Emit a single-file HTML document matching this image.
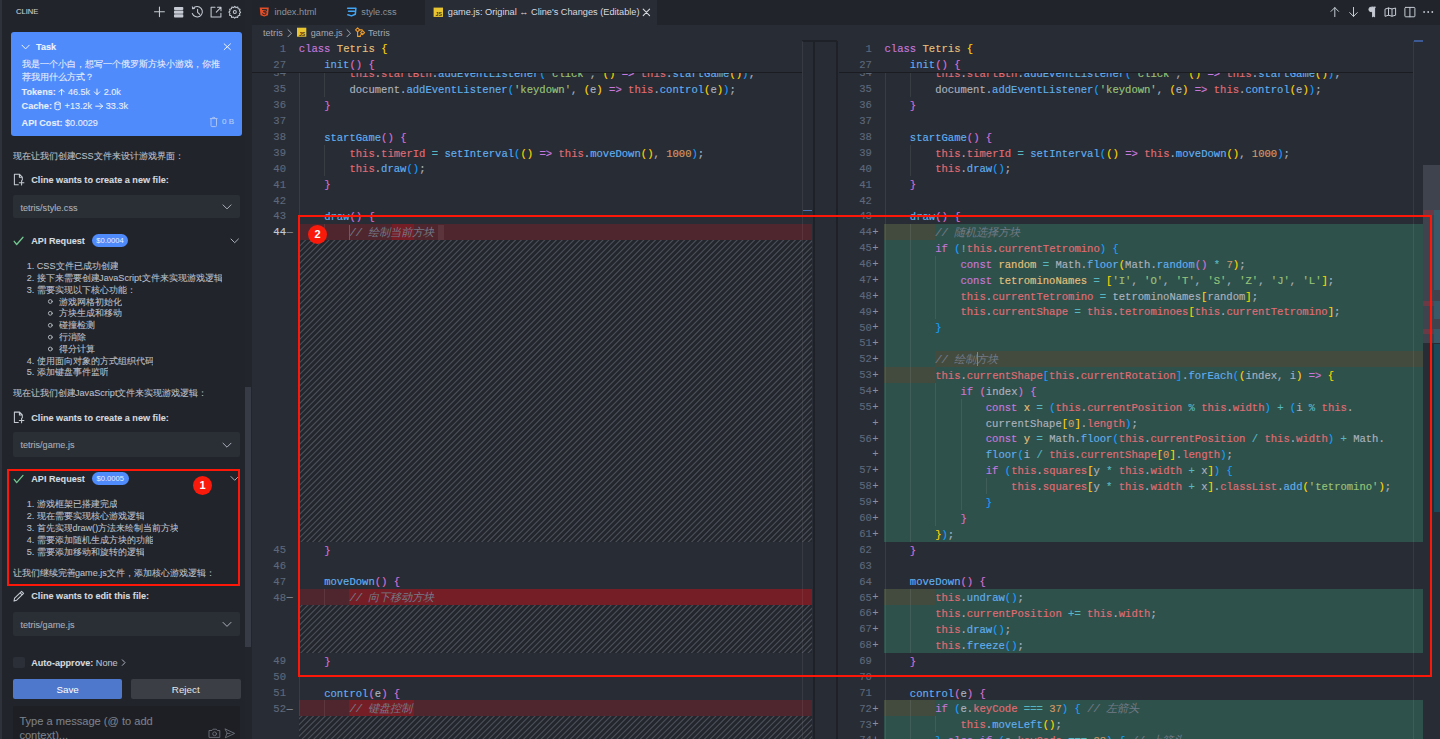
<!DOCTYPE html>
<html><head><meta charset="utf-8">
<style>
*{box-sizing:border-box;margin:0;padding:0}
html,body{width:1440px;height:739px;overflow:hidden;background:#282c34;font-family:"Liberation Sans",sans-serif;}
.a{position:absolute;white-space:nowrap}
.cj{display:inline-block;overflow:hidden;vertical-align:top;white-space:nowrap}
/* sidebar */
#strip{position:absolute;left:0;top:0;width:2px;height:739px;background:#2e323b}
#side{position:absolute;left:2px;top:0;width:243px;height:739px;background:#21252b;overflow:hidden}
#sbtrack{position:absolute;left:245px;top:0;width:7px;height:739px;background:#22262c}
#sbthumb{position:absolute;left:245px;top:387px;width:6px;height:260px;background:#363b45}
.st{position:absolute;white-space:nowrap;font-size:9.1px;line-height:12px;color:#b9bec6;-webkit-text-stroke:0.1px currentColor}
.bold{font-weight:bold;color:#d5d9df}
.dd{position:absolute;left:13.4px;width:226.6px;height:24px;background:#2a2e35;border-radius:2px}
.chev{position:absolute}
.badge{position:absolute;height:13.5px;border-radius:7px;background:#508bfc;color:#e9f0fc;font-size:7.6px;line-height:13.5px;text-align:center}
.redbox{position:absolute;border:2.9px solid #fc1708}
.circ{position:absolute;width:19px;height:19px;border-radius:50%;background:#fa1a0c;color:#fff;font-size:11px;line-height:19px;text-align:center;font-weight:bold}
/* editor */
#tabs{position:absolute;left:252px;top:0;width:1188px;height:24.5px;background:#21252b}
.tab{position:absolute;top:0;height:24.5px;font-size:9.2px;line-height:24.5px;color:#8d939d;white-space:nowrap}
#crumbs{position:absolute;left:252px;top:24.5px;width:1188px;height:16px;background:#282c34}
.cr{position:absolute;font-size:9.1px;line-height:16px;color:#a3a9b3;white-space:nowrap;top:25.1px}
.ln{position:absolute;padding-top:1.2px;-webkit-text-stroke:0.15px currentColor;text-align:right;font-family:"Liberation Mono",monospace;font-size:10.55px;line-height:15.88px;height:15.88px;color:#5d687b}
.ln.act{color:#c4c9d2}
.mk{position:absolute;padding-top:1px;font-family:"Liberation Mono",monospace;font-size:10.55px;line-height:15.88px;color:#8b909a}
.cl{position:absolute;padding-top:1.9px;-webkit-text-stroke:0.15px currentColor;font-family:"Liberation Mono",monospace;font-size:10.55px;line-height:15.88px;height:15.88px;color:#abb2bf;white-space:pre}
.cl i{color:#737a86;font-style:italic}
.cl .cj{font-size:11.2px;-webkit-text-stroke:0}
.k{color:#c678dd}.t{color:#e06c75}.p{color:#e06c75}.f{color:#61afef}.y{color:#e5c07b}.s{color:#98c379}.n{color:#d19a66}.o{color:#56b6c2}
.b0{color:#ffd700}.b1{color:#da70d6}.b2{color:#179fff}
.hatch{position:absolute;display:block}
.dl{position:absolute;background:#4f262d}
.al{position:absolute;background:#2f514b}
.sticky{position:absolute;background:#282c34}
.shadow{position:absolute;height:1.6px;background:#1a1c21}
.vl{position:absolute;width:1px;background:rgba(255,255,255,0.07)}
.ol{position:absolute;background:#434b3f}
.rc{position:absolute;background:#761e26}
.ig{position:absolute;background:rgba(255,255,255,0.08)}
</style></head><body>
<svg width="0" height="0" style="position:absolute"><defs><pattern id="hp" patternUnits="userSpaceOnUse" width="5.83" height="5.83"><rect width="6" height="6" fill="#23262d"/><path d="M-0.5,6.33 L6.33,-0.5 M-2,2 L2,-2 M3.83,7.83 L7.83,3.83" stroke="#4a4e57" stroke-width="1.1" shape-rendering="crispEdges"/></pattern></defs></svg>
<div id="strip"></div>
<div id="side">
</div>
<div id="sbtrack"></div><div id="sbthumb"></div>

<!-- header -->
<div class="st" style="left:16px;top:6px;font-size:7.6px;color:#c9ced6">CLINE</div>

<!-- task box -->
<div style="position:absolute;left:11px;top:32.2px;width:231px;height:104.3px;background:#508bfc;border-radius:3px"></div>
<div class="st bold" style="left:36px;top:41px;color:#eef3fc">Task</div>
<div class="st" style="left:21.6px;top:58px;color:#e8eefa"><span class="cj" style="width:206.36px">我是一个小白，想写一个俄罗斯方块小游戏，你推</span></div>
<div class="st" style="left:21.6px;top:70.5px;color:#e8eefa"><span class="cj" style="width:75.04px">荐我用什么方式？</span></div>
<div class="st" style="left:21.6px;top:85.5px;color:#e8eefa"><b>Tokens:</b></div><div class="st" style="left:67.9px;top:85.5px;color:#e8eefa">46.5k</div><div class="st" style="left:103.7px;top:85.5px;color:#e8eefa">2.0k</div>
<div class="st" style="left:21.6px;top:100.4px;color:#e8eefa"><b>Cache:</b></div><div class="st" style="left:64.6px;top:100.4px;color:#e8eefa">+13.2k</div><div class="st" style="left:105.8px;top:100.4px;color:#e8eefa">33.3k</div>
<div class="st" style="left:21.6px;top:117.4px;color:#e8eefa"><b>API Cost:</b> $0.0029</div>
<div class="st" style="left:222px;top:116px;color:#b5cdf6;font-size:8px">0 B</div>

<div class="st" style="left:12.7px;top:149.6px"><span class="cj" style="width:62.30px">现在让我们创建</span>CSS<span class="cj" style="width:89.00px">文件来设计游戏界面：</span></div>
<div class="st bold" style="left:31.3px;top:174px">Cline wants to create a new file:</div>
<div class="dd" style="top:194.8px;height:23.4px"></div>
<div class="st" style="left:20.4px;top:201.8px;color:#a9aeb6">tetris/style.css</div>
<div class="st bold" style="left:31.3px;top:235.3px">API Request</div>
<div class="badge" style="left:91.6px;top:233.5px;width:36.8px">$0.0004</div>
<div class="st" style="left:26.7px;top:260.2px">1. CSS<span class="cj" style="width:62.30px">文件已成功创建</span></div>
<div class="st" style="left:26.7px;top:272.1px">2. <span class="cj" style="width:62.30px">接下来需要创建</span>JavaScript<span class="cj" style="width:80.10px">文件来实现游戏逻辑</span></div>
<div class="st" style="left:26.7px;top:284.1px">3. <span class="cj" style="width:97.90px">需要实现以下核心功能：</span></div>
<div class="st" style="left:59.3px;top:295.5px"><span class="cj" style="width:62.30px">游戏网格初始化</span></div>
<div class="st" style="left:59.3px;top:307.3px"><span class="cj" style="width:62.30px">方块生成和移动</span></div>
<div class="st" style="left:59.3px;top:319.3px"><span class="cj" style="width:35.60px">碰撞检测</span></div>
<div class="st" style="left:59.3px;top:331.2px"><span class="cj" style="width:26.70px">行消除</span></div>
<div class="st" style="left:59.3px;top:343px"><span class="cj" style="width:35.60px">得分计算</span></div>
<div class="st" style="left:26.7px;top:354.5px">4. <span class="cj" style="width:115.70px">使用面向对象的方式组织代码</span></div>
<div class="st" style="left:26.7px;top:366px">5. <span class="cj" style="width:71.20px">添加键盘事件监听</span></div>

<div class="st" style="left:12.7px;top:387.2px"><span class="cj" style="width:62.30px">现在让我们创建</span>JavaScript<span class="cj" style="width:89.00px">文件来实现游戏逻辑：</span></div>
<div class="st bold" style="left:31.3px;top:411.8px">Cline wants to create a new file:</div>
<div class="dd" style="top:431.9px;height:25px"></div>
<div class="st" style="left:20.4px;top:439.4px;color:#a9aeb6">tetris/game.js</div>
<div class="st bold" style="left:31.3px;top:473.4px">API Request</div>
<div class="badge" style="left:91.8px;top:471.8px;width:36.8px">$0.0005</div>
<div class="st" style="left:26.7px;top:498.4px">1. <span class="cj" style="width:80.10px">游戏框架已搭建完成</span></div>
<div class="st" style="left:26.7px;top:510px">2. <span class="cj" style="width:106.80px">现在需要实现核心游戏逻辑</span></div>
<div class="st" style="left:26.7px;top:521.8px">3. <span class="cj" style="width:35.60px">首先实现</span>draw()<span class="cj" style="width:80.10px">方法来绘制当前方块</span></div>
<div class="st" style="left:26.7px;top:533.8px">4. <span class="cj" style="width:115.70px">需要添加随机生成方块的功能</span></div>
<div class="st" style="left:26.7px;top:545.6px">5. <span class="cj" style="width:106.80px">需要添加移动和旋转的逻辑</span></div>
<div class="st" style="left:12.7px;top:566.7px"><span class="cj" style="width:62.30px">让我们继续完善</span>game.js<span class="cj" style="width:106.80px">文件，添加核心游戏逻辑：</span></div>
<div class="redbox" style="left:7px;top:468.8px;width:233px;height:117.6px"></div>
<div class="circ" style="left:193px;top:475.7px">1</div>

<div class="st bold" style="left:31.3px;top:590.4px">Cline wants to edit this file:</div>
<div class="dd" style="top:611.9px;height:24.1px"></div>
<div class="st" style="left:20.4px;top:618.6px;color:#a9aeb6">tetris/game.js</div>

<div style="position:absolute;left:13.3px;top:656.8px;width:11.5px;height:11.5px;background:#2b2f37;border-radius:2px"></div>
<div class="st" style="left:31.2px;top:656.9px"><b style="color:#d5d9df">Auto-approve:</b> None</div>
<div style="position:absolute;left:12.9px;top:679px;width:109.4px;height:19.6px;background:#4d78cc;border-radius:2px;color:#fff;font-size:9.8px;line-height:21.4px;text-align:center">Save</div>
<div style="position:absolute;left:130.9px;top:679px;width:109.7px;height:19.6px;background:#3b3e45;border-radius:2px;color:#e6e6e6;font-size:9.8px;line-height:21.4px;text-align:center">Reject</div>
<div style="position:absolute;left:13.3px;top:706px;width:226.7px;height:40px;background:#1d1f24;border-radius:2px"></div>
<div class="st" style="left:19.4px;top:714px;font-size:11.1px;line-height:14px;color:#7b8089">Type a message (@ to add</div>
<div class="st" style="left:19.4px;top:727.5px;font-size:11.1px;line-height:14px;color:#7b8089">context)...</div>


<!-- ICONS -->
<svg style="position:absolute;left:0;top:0" width="252" height="739" fill="none" stroke-linecap="round" stroke-linejoin="round">
 <!-- header -->
 <g stroke="#c5cad3" stroke-width="1.05">
  <path d="M154.5 11.8H164.4M159.45 6.9V16.6"/>
  <path d="M193 8.4 L192.3 6.9 M192.4 8.7 L194.4 8.5"/>
  <path d="M193.1 8.5 A5.2 5.2 0 1 1 192.3 13.5"/>
  <path d="M197.6 9.2V12.3L199.8 14.4"/>
  <path d="M215 7.3H211.1V17H220.9V13.2M216.3 12.1L220.7 7.6M217.5 7.3H221V10.8"/>
  <circle cx="234.8" cy="12" r="1.5"/>
  <path d="M234.8 6.3 L236 7.6 L237.8 7 L238.2 8.8 L240 9.3 L239.5 11 L240.6 12.3 L239.4 13.6 L239.9 15.3 L238.1 15.7 L237.6 17.5 L235.9 17 L234.7 18.2 L233.5 17 L231.7 17.5 L231.3 15.7 L229.5 15.2 L230 13.5 L228.9 12.2 L230.1 10.9 L229.6 9.2 L231.4 8.8 L231.9 7 L233.6 7.6 Z"/>
 </g>
 <g fill="#c5cad3" stroke="none">
  <rect x="174" y="6.9" width="9.3" height="3.2" rx="0.8"/>
  <rect x="174" y="10.6" width="9.3" height="3.2" rx="0.8"/>
  <rect x="174" y="14.3" width="9.3" height="3.2" rx="0.8"/>
 </g>
 <!-- task box -->
 <g stroke="#eef3fc" stroke-width="1">
  <path d="M22 45.2L25.6 48.9L29.2 45.2"/>
  <path d="M224.2 43.9L230.4 49.6M230.4 43.9L224.2 49.6"/>
  <path d="M61.6 94.8V89.3M58.9 91.9L61.6 89.2L64.3 91.9M97 89V94.6M94.3 91.9L97 94.6L99.7 91.9M95.6 106.2H102.6M99.8 103.4L102.6 106.2L99.8 109"/>
  <path d="M55 103.2V108.6A2.6 1.2 0 0 0 60.2 108.6V103.2M55 103.2A2.6 1.2 0 0 1 60.2 103.2A2.6 1.2 0 0 1 55 103.2"/>
 </g>
 <g stroke="#a8c3f5" stroke-width="1">
  <path d="M210.3 118.6H217.2M212 118.4A1.8 1.5 0 0 1 215.5 118.4M211 119V125.6A1 1 0 0 0 212 126.6H215.5A1 1 0 0 0 216.5 125.6V119"/>
 </g>
 <!-- file add icons -->
 <g stroke="#c5cad3" stroke-width="1.05">
  <path d="M18.3 184.7H14.4V174.3H19.6L22.3 177V180M19.4 174.4V177.2H22.2M21.6 180.4V185M19.3 182.7H23.9"/>
  <path d="M18.3 422.5H14.4V412.1H19.6L22.3 414.8V417.8M19.4 412.2V415H22.2M21.6 418.2V422.8M19.3 420.5H23.9"/>
  <path d="M14 601 L14.6 598.2 L21.6 591.4 L23.6 593.3 L16.7 600.2 Z M20.2 592.8 L22.2 594.8"/>
 </g>
 <!-- checks -->
 <g stroke="#73c991" stroke-width="1.3">
  <path d="M14.2 241.3L16.7 244.5L23 237.3"/>
  <path d="M14.2 479.4L16.7 482.6L23 475.4"/>
 </g>
 <!-- chevrons -->
 <g stroke="#abb1bb" stroke-width="1">
  <path d="M223 204.9L227 208.9L231 204.9"/>
  <path d="M223 443.2L227 447.2L231 443.2"/>
  <path d="M223 622.4L227 626.4L231 622.4"/>
  <path d="M231 239L234.7 242.7L238.4 239"/>
  <path d="M231 476.6L234.7 480.3L237.6 477.4"/>
  <path d="M122.3 659.8L125 662.6L122.3 665.4"/>
 </g>
 <!-- bullets -->
 <g stroke="#b9bec6" stroke-width="0.9">
  <circle cx="50.3" cy="301.5" r="1.9"/>
  <circle cx="50.3" cy="313.3" r="1.9"/>
  <circle cx="50.3" cy="325.3" r="1.9"/>
  <circle cx="50.3" cy="337.2" r="1.9"/>
  <circle cx="50.3" cy="349" r="1.9"/>
 </g>
 <!-- bottom input icons -->
 <g stroke="#6d727b" stroke-width="0.9">
  <path d="M209.4 730.5H212L213 729.2H216.3L217.3 730.5H219.8V737.4H209.4Z"/>
  <circle cx="214.6" cy="733.8" r="1.9"/>
  <path d="M225.3 729L234.6 733.4L225.3 737.8L227 733.4Z M227 733.4H230"/>
 </g>
</svg>


<!-- editor -->
<div id="tabs"></div>
<div class="tab" style="left:252px;width:86px;"></div>
<div class="tab" style="left:274.5px">index.html</div>
<div class="tab" style="left:361.3px">style.css</div>
<div style="position:absolute;left:425px;top:0;width:231.5px;height:24.5px;background:#282c34"></div>
<div class="tab" style="left:447.8px;color:#d7dae0">game.js: Original &#8596; Cline's Changes (Editable)</div>
<div id="crumbs"></div>
<div class="cr" style="left:263px">tetris</div>
<div class="cr" style="left:310.8px">game.js</div>
<div class="cr" style="left:368px">Tetris</div>

<svg style="position:absolute;left:252px;top:0" width="1188" height="42" fill="none" stroke-linecap="round" stroke-linejoin="round">
 <g transform="translate(-252 0)">
 <!-- html5 -->
 <path d="M259.7 7.6H268.8L268 15.3L264.25 16.6L260.5 15.3Z" fill="#e44d26"/>
 <path d="M262 9.5H266.6L266.3 11.1H263.7L263.8 12.1H266.1L265.8 14.2L264.25 14.7L262.7 14.2L262.6 13.3" stroke="#21252b" stroke-width="0.9" stroke-linecap="butt" stroke-linejoin="miter"/>
 <!-- css3 -->
 <path d="M347.6 8.3H355.9L355.3 14.3L351.5 15.9L347.8 14.7" stroke="#42a5f5" stroke-width="1.5" stroke-linejoin="round"/>
 <path d="M348.5 11.3H354.5" stroke="#42a5f5" stroke-width="1.4"/>
 <!-- js tab -->
 <rect x="433.6" y="7.6" width="9.4" height="9.3" fill="#e8c531"/>
 <text x="441.9" y="16.2" font-family="Liberation Sans" font-size="5.2" font-weight="bold" fill="#3a3414" text-anchor="end">JS</text>
 <path d="M643.2 9.2L649.6 15.6M649.6 9.2L643.2 15.6" stroke="#d7dae0" stroke-width="1.1"/>
 <!-- breadcrumb -->
 <rect x="297" y="27.7" width="9.3" height="9" fill="#e8c531"/>
 <text x="305.3" y="36" font-family="Liberation Sans" font-size="5.2" font-weight="bold" fill="#3a3414" text-anchor="end">JS</text>
 <path d="M288 29.7L291.5 33.2L288 36.7M347 29.7L350.5 33.2L347 36.7" stroke="#a3a9b3" stroke-width="1"/>
 <g stroke="#ee9d28" stroke-width="1.1">
  <path d="M355.6 29.9L357.6 27.9L359.6 29.9L357.6 31.9Z"/>
  <path d="M360.6 32.6L362.6 30.6L364.6 32.6L362.6 34.6Z"/>
  <path d="M360.3 35.4L362.3 33.4"/>
  <path d="M359.6 29.9H362.2M357.6 31.9V36.4H360.4"/>
 </g>
 <!-- right icons -->
 <g stroke="#c5cad3" stroke-width="1">
  <path d="M1334.8 16.6V7.6M1331 11.4L1334.8 7.6L1338.6 11.4"/>
  <path d="M1353.5 7.4V16.4M1349.7 12.6L1353.5 16.4L1357.3 12.6"/>
  <path d="M1372.6 7.2V16.8M1374.6 7.2V16.8M1375.4 7.2H1371.1A2.2 2.2 0 0 0 1371.1 11.6H1372.6"/>
  <path d="M1385.4 9L1388.5 8L1392 9L1395.6 8V15.2L1392 16.2L1388.5 15.2L1385.4 16.2Z M1388.5 8V15.2 M1392 9V16.2"/>
  <rect x="1404.9" y="7.4" width="10" height="9.4" rx="0.8"/>
  <path d="M1409.9 7.4V16.8"/>
 </g>
 <g fill="#c5cad3" stroke="none">
  <circle cx="1424.1" cy="12" r="0.9"/><circle cx="1428.2" cy="12" r="0.9"/><circle cx="1432.3" cy="12" r="0.9"/>
  <path d="M1372.6 7.2H1374.6V16.8H1372.6Z M1372.6 7.2H1371.1A2.2 2.2 0 0 0 1371.1 11.6H1372.6Z"/>
 </g>
 </g>
</svg>
<svg class="hatch" style="left:298.5px;top:240px" width="513.5" height="302"><rect width="100%" height="100%" fill="#23262d"/><path d="M-308.97 304.00L-2.97 -2.00M-303.14 304.00L2.86 -2.00M-297.31 304.00L8.69 -2.00M-291.48 304.00L14.52 -2.00M-285.65 304.00L20.35 -2.00M-279.82 304.00L26.18 -2.00M-273.99 304.00L32.01 -2.00M-268.16 304.00L37.84 -2.00M-262.33 304.00L43.67 -2.00M-256.50 304.00L49.50 -2.00M-250.67 304.00L55.33 -2.00M-244.84 304.00L61.16 -2.00M-239.01 304.00L66.99 -2.00M-233.18 304.00L72.82 -2.00M-227.35 304.00L78.65 -2.00M-221.52 304.00L84.48 -2.00M-215.69 304.00L90.31 -2.00M-209.86 304.00L96.14 -2.00M-204.03 304.00L101.97 -2.00M-198.20 304.00L107.80 -2.00M-192.37 304.00L113.63 -2.00M-186.54 304.00L119.46 -2.00M-180.71 304.00L125.29 -2.00M-174.88 304.00L131.12 -2.00M-169.05 304.00L136.95 -2.00M-163.22 304.00L142.78 -2.00M-157.39 304.00L148.61 -2.00M-151.56 304.00L154.44 -2.00M-145.73 304.00L160.27 -2.00M-139.90 304.00L166.10 -2.00M-134.07 304.00L171.93 -2.00M-128.24 304.00L177.76 -2.00M-122.41 304.00L183.59 -2.00M-116.58 304.00L189.42 -2.00M-110.75 304.00L195.25 -2.00M-104.92 304.00L201.08 -2.00M-99.09 304.00L206.91 -2.00M-93.26 304.00L212.74 -2.00M-87.43 304.00L218.57 -2.00M-81.60 304.00L224.40 -2.00M-75.77 304.00L230.23 -2.00M-69.94 304.00L236.06 -2.00M-64.11 304.00L241.89 -2.00M-58.28 304.00L247.72 -2.00M-52.45 304.00L253.55 -2.00M-46.62 304.00L259.38 -2.00M-40.79 304.00L265.21 -2.00M-34.96 304.00L271.04 -2.00M-29.13 304.00L276.87 -2.00M-23.30 304.00L282.70 -2.00M-17.47 304.00L288.53 -2.00M-11.64 304.00L294.36 -2.00M-5.81 304.00L300.19 -2.00M0.02 304.00L306.02 -2.00M5.85 304.00L311.85 -2.00M11.68 304.00L317.68 -2.00M17.51 304.00L323.51 -2.00M23.34 304.00L329.34 -2.00M29.17 304.00L335.17 -2.00M35.00 304.00L341.00 -2.00M40.83 304.00L346.83 -2.00M46.66 304.00L352.66 -2.00M52.49 304.00L358.49 -2.00M58.32 304.00L364.32 -2.00M64.15 304.00L370.15 -2.00M69.98 304.00L375.98 -2.00M75.81 304.00L381.81 -2.00M81.64 304.00L387.64 -2.00M87.47 304.00L393.47 -2.00M93.30 304.00L399.30 -2.00M99.13 304.00L405.13 -2.00M104.96 304.00L410.96 -2.00M110.79 304.00L416.79 -2.00M116.62 304.00L422.62 -2.00M122.45 304.00L428.45 -2.00M128.28 304.00L434.28 -2.00M134.11 304.00L440.11 -2.00M139.94 304.00L445.94 -2.00M145.77 304.00L451.77 -2.00M151.60 304.00L457.60 -2.00M157.43 304.00L463.43 -2.00M163.26 304.00L469.26 -2.00M169.09 304.00L475.09 -2.00M174.92 304.00L480.92 -2.00M180.75 304.00L486.75 -2.00M186.58 304.00L492.58 -2.00M192.41 304.00L498.41 -2.00M198.24 304.00L504.24 -2.00M204.07 304.00L510.07 -2.00M209.90 304.00L515.90 -2.00M215.73 304.00L521.73 -2.00M221.56 304.00L527.56 -2.00M227.39 304.00L533.39 -2.00M233.22 304.00L539.22 -2.00M239.05 304.00L545.05 -2.00M244.88 304.00L550.88 -2.00M250.71 304.00L556.71 -2.00M256.54 304.00L562.54 -2.00M262.37 304.00L568.37 -2.00M268.20 304.00L574.20 -2.00M274.03 304.00L580.03 -2.00M279.86 304.00L585.86 -2.00M285.69 304.00L591.69 -2.00M291.52 304.00L597.52 -2.00M297.35 304.00L603.35 -2.00M303.18 304.00L609.18 -2.00M309.01 304.00L615.01 -2.00M314.84 304.00L620.84 -2.00M320.67 304.00L626.67 -2.00M326.50 304.00L632.50 -2.00M332.33 304.00L638.33 -2.00M338.16 304.00L644.16 -2.00M343.99 304.00L649.99 -2.00M349.82 304.00L655.82 -2.00M355.65 304.00L661.65 -2.00M361.48 304.00L667.48 -2.00M367.31 304.00L673.31 -2.00M373.14 304.00L679.14 -2.00M378.97 304.00L684.97 -2.00M384.80 304.00L690.80 -2.00M390.63 304.00L696.63 -2.00M396.46 304.00L702.46 -2.00M402.29 304.00L708.29 -2.00M408.12 304.00L714.12 -2.00M413.95 304.00L719.95 -2.00M419.78 304.00L725.78 -2.00M425.61 304.00L731.61 -2.00M431.44 304.00L737.44 -2.00M437.27 304.00L743.27 -2.00M443.10 304.00L749.10 -2.00M448.93 304.00L754.93 -2.00M454.76 304.00L760.76 -2.00M460.59 304.00L766.59 -2.00M466.42 304.00L772.42 -2.00M472.25 304.00L778.25 -2.00M478.08 304.00L784.08 -2.00M483.91 304.00L789.91 -2.00M489.74 304.00L795.74 -2.00M495.57 304.00L801.57 -2.00M501.40 304.00L807.40 -2.00M507.23 304.00L813.23 -2.00M513.06 304.00L819.06 -2.00M518.89 304.00L824.89 -2.00" stroke="#4b4f58" stroke-width="1.15" fill="none"/></svg><svg class="hatch" style="left:298.5px;top:605px" width="513.5" height="48"><rect width="100%" height="100%" fill="#23262d"/><path d="M-58.51 50.00L-6.51 -2.00M-52.68 50.00L-0.68 -2.00M-46.85 50.00L5.15 -2.00M-41.02 50.00L10.98 -2.00M-35.19 50.00L16.81 -2.00M-29.36 50.00L22.64 -2.00M-23.53 50.00L28.47 -2.00M-17.70 50.00L34.30 -2.00M-11.87 50.00L40.13 -2.00M-6.04 50.00L45.96 -2.00M-0.21 50.00L51.79 -2.00M5.62 50.00L57.62 -2.00M11.45 50.00L63.45 -2.00M17.28 50.00L69.28 -2.00M23.11 50.00L75.11 -2.00M28.94 50.00L80.94 -2.00M34.77 50.00L86.77 -2.00M40.60 50.00L92.60 -2.00M46.43 50.00L98.43 -2.00M52.26 50.00L104.26 -2.00M58.09 50.00L110.09 -2.00M63.92 50.00L115.92 -2.00M69.75 50.00L121.75 -2.00M75.58 50.00L127.58 -2.00M81.41 50.00L133.41 -2.00M87.24 50.00L139.24 -2.00M93.07 50.00L145.07 -2.00M98.90 50.00L150.90 -2.00M104.73 50.00L156.73 -2.00M110.56 50.00L162.56 -2.00M116.39 50.00L168.39 -2.00M122.22 50.00L174.22 -2.00M128.05 50.00L180.05 -2.00M133.88 50.00L185.88 -2.00M139.71 50.00L191.71 -2.00M145.54 50.00L197.54 -2.00M151.37 50.00L203.37 -2.00M157.20 50.00L209.20 -2.00M163.03 50.00L215.03 -2.00M168.86 50.00L220.86 -2.00M174.69 50.00L226.69 -2.00M180.52 50.00L232.52 -2.00M186.35 50.00L238.35 -2.00M192.18 50.00L244.18 -2.00M198.01 50.00L250.01 -2.00M203.84 50.00L255.84 -2.00M209.67 50.00L261.67 -2.00M215.50 50.00L267.50 -2.00M221.33 50.00L273.33 -2.00M227.16 50.00L279.16 -2.00M232.99 50.00L284.99 -2.00M238.82 50.00L290.82 -2.00M244.65 50.00L296.65 -2.00M250.48 50.00L302.48 -2.00M256.31 50.00L308.31 -2.00M262.14 50.00L314.14 -2.00M267.97 50.00L319.97 -2.00M273.80 50.00L325.80 -2.00M279.63 50.00L331.63 -2.00M285.46 50.00L337.46 -2.00M291.29 50.00L343.29 -2.00M297.12 50.00L349.12 -2.00M302.95 50.00L354.95 -2.00M308.78 50.00L360.78 -2.00M314.61 50.00L366.61 -2.00M320.44 50.00L372.44 -2.00M326.27 50.00L378.27 -2.00M332.10 50.00L384.10 -2.00M337.93 50.00L389.93 -2.00M343.76 50.00L395.76 -2.00M349.59 50.00L401.59 -2.00M355.42 50.00L407.42 -2.00M361.25 50.00L413.25 -2.00M367.08 50.00L419.08 -2.00M372.91 50.00L424.91 -2.00M378.74 50.00L430.74 -2.00M384.57 50.00L436.57 -2.00M390.40 50.00L442.40 -2.00M396.23 50.00L448.23 -2.00M402.06 50.00L454.06 -2.00M407.89 50.00L459.89 -2.00M413.72 50.00L465.72 -2.00M419.55 50.00L471.55 -2.00M425.38 50.00L477.38 -2.00M431.21 50.00L483.21 -2.00M437.04 50.00L489.04 -2.00M442.87 50.00L494.87 -2.00M448.70 50.00L500.70 -2.00M454.53 50.00L506.53 -2.00M460.36 50.00L512.36 -2.00M466.19 50.00L518.19 -2.00M472.02 50.00L524.02 -2.00M477.85 50.00L529.85 -2.00M483.68 50.00L535.68 -2.00M489.51 50.00L541.51 -2.00M495.34 50.00L547.34 -2.00M501.17 50.00L553.17 -2.00M507.00 50.00L559.00 -2.00M512.83 50.00L564.83 -2.00M518.66 50.00L570.66 -2.00" stroke="#4b4f58" stroke-width="1.15" fill="none"/></svg><svg class="hatch" style="left:298.5px;top:716px" width="513.5" height="32"><rect width="100%" height="100%" fill="#23262d"/><path d="M-36.91 34.00L-0.91 -2.00M-31.08 34.00L4.92 -2.00M-25.25 34.00L10.75 -2.00M-19.42 34.00L16.58 -2.00M-13.59 34.00L22.41 -2.00M-7.76 34.00L28.24 -2.00M-1.93 34.00L34.07 -2.00M3.90 34.00L39.90 -2.00M9.73 34.00L45.73 -2.00M15.56 34.00L51.56 -2.00M21.39 34.00L57.39 -2.00M27.22 34.00L63.22 -2.00M33.05 34.00L69.05 -2.00M38.88 34.00L74.88 -2.00M44.71 34.00L80.71 -2.00M50.54 34.00L86.54 -2.00M56.37 34.00L92.37 -2.00M62.20 34.00L98.20 -2.00M68.03 34.00L104.03 -2.00M73.86 34.00L109.86 -2.00M79.69 34.00L115.69 -2.00M85.52 34.00L121.52 -2.00M91.35 34.00L127.35 -2.00M97.18 34.00L133.18 -2.00M103.01 34.00L139.01 -2.00M108.84 34.00L144.84 -2.00M114.67 34.00L150.67 -2.00M120.50 34.00L156.50 -2.00M126.33 34.00L162.33 -2.00M132.16 34.00L168.16 -2.00M137.99 34.00L173.99 -2.00M143.82 34.00L179.82 -2.00M149.65 34.00L185.65 -2.00M155.48 34.00L191.48 -2.00M161.31 34.00L197.31 -2.00M167.14 34.00L203.14 -2.00M172.97 34.00L208.97 -2.00M178.80 34.00L214.80 -2.00M184.63 34.00L220.63 -2.00M190.46 34.00L226.46 -2.00M196.29 34.00L232.29 -2.00M202.12 34.00L238.12 -2.00M207.95 34.00L243.95 -2.00M213.78 34.00L249.78 -2.00M219.61 34.00L255.61 -2.00M225.44 34.00L261.44 -2.00M231.27 34.00L267.27 -2.00M237.10 34.00L273.10 -2.00M242.93 34.00L278.93 -2.00M248.76 34.00L284.76 -2.00M254.59 34.00L290.59 -2.00M260.42 34.00L296.42 -2.00M266.25 34.00L302.25 -2.00M272.08 34.00L308.08 -2.00M277.91 34.00L313.91 -2.00M283.74 34.00L319.74 -2.00M289.57 34.00L325.57 -2.00M295.40 34.00L331.40 -2.00M301.23 34.00L337.23 -2.00M307.06 34.00L343.06 -2.00M312.89 34.00L348.89 -2.00M318.72 34.00L354.72 -2.00M324.55 34.00L360.55 -2.00M330.38 34.00L366.38 -2.00M336.21 34.00L372.21 -2.00M342.04 34.00L378.04 -2.00M347.87 34.00L383.87 -2.00M353.70 34.00L389.70 -2.00M359.53 34.00L395.53 -2.00M365.36 34.00L401.36 -2.00M371.19 34.00L407.19 -2.00M377.02 34.00L413.02 -2.00M382.85 34.00L418.85 -2.00M388.68 34.00L424.68 -2.00M394.51 34.00L430.51 -2.00M400.34 34.00L436.34 -2.00M406.17 34.00L442.17 -2.00M412.00 34.00L448.00 -2.00M417.83 34.00L453.83 -2.00M423.66 34.00L459.66 -2.00M429.49 34.00L465.49 -2.00M435.32 34.00L471.32 -2.00M441.15 34.00L477.15 -2.00M446.98 34.00L482.98 -2.00M452.81 34.00L488.81 -2.00M458.64 34.00L494.64 -2.00M464.47 34.00L500.47 -2.00M470.30 34.00L506.30 -2.00M476.13 34.00L512.13 -2.00M481.96 34.00L517.96 -2.00M487.79 34.00L523.79 -2.00M493.62 34.00L529.62 -2.00M499.45 34.00L535.45 -2.00M505.28 34.00L541.28 -2.00M511.11 34.00L547.11 -2.00M516.94 34.00L552.94 -2.00" stroke="#4b4f58" stroke-width="1.15" fill="none"/></svg><div class="dl" style="left:298.5px;top:224px;width:513.5px;height:16px"></div><div class="dl" style="left:298.5px;top:589px;width:513.5px;height:16px"></div><div class="dl" style="left:298.5px;top:700px;width:513.5px;height:16px"></div><div class="rc" style="left:391.6px;top:224px;width:22.4px;height:16px"></div><div class="rc" style="left:349.4px;top:589px;width:462.6px;height:16px"></div><div class="rc" style="left:349.4px;top:700px;width:64.8px;height:16px"></div><div class="ig" style="left:298.8px;top:65px;width:1.0px;height:175px"></div><div class="ig" style="left:298.8px;top:542px;width:1.0px;height:63px"></div><div class="ig" style="left:298.8px;top:653px;width:1.0px;height:63px"></div><div class="ig" style="left:324.1px;top:65px;width:1.0px;height:32px"></div><div class="ig" style="left:324.1px;top:145px;width:1.0px;height:31px"></div><div class="ig" style="left:324.1px;top:224px;width:1.0px;height:16px"></div><div class="ig" style="left:324.1px;top:589px;width:1.0px;height:16px"></div><div class="ig" style="left:324.1px;top:700px;width:1.0px;height:16px"></div><div class="ln" style="left:246.0px;top:65.30px;width:40px">34</div><div class="cl" style="left:298.8px;top:65.30px">        <span class="t">this</span>.<span class="p">startBtn</span>.<span class="f">addEventListener</span><span class="b2">(</span><span class="s">'click'</span>, <span class="b0">(</span><span class="b0">)</span> <span class="k">=&gt;</span> <span class="t">this</span>.<span class="f">startGame</span><span class="b0">(</span><span class="b0">)</span><span class="b2">)</span>;</div><div class="ln" style="left:246.0px;top:81.18px;width:40px">35</div><div class="cl" style="left:298.8px;top:81.18px">        document.<span class="f">addEventListener</span><span class="b2">(</span><span class="s">'keydown'</span>, <span class="b0">(</span>e<span class="b0">)</span> <span class="k">=&gt;</span> <span class="t">this</span>.<span class="f">control</span><span class="b0">(</span>e<span class="b0">)</span><span class="b2">)</span>;</div><div class="ln" style="left:246.0px;top:97.06px;width:40px">36</div><div class="cl" style="left:298.8px;top:97.06px">    <span class="b1">}</span></div><div class="ln" style="left:246.0px;top:112.94px;width:40px">37</div><div class="ln" style="left:246.0px;top:128.82px;width:40px">38</div><div class="cl" style="left:298.8px;top:128.82px">    <span class="f">startGame</span><span class="b1">(</span><span class="b1">)</span> <span class="b1">{</span></div><div class="ln" style="left:246.0px;top:144.70px;width:40px">39</div><div class="cl" style="left:298.8px;top:144.70px">        <span class="t">this</span>.<span class="p">timerId</span> <span class="o">=</span> <span class="f">setInterval</span><span class="b2">(</span><span class="b0">(</span><span class="b0">)</span> <span class="k">=&gt;</span> <span class="t">this</span>.<span class="f">moveDown</span><span class="b0">(</span><span class="b0">)</span>, <span class="n">1000</span><span class="b2">)</span>;</div><div class="ln" style="left:246.0px;top:160.58px;width:40px">40</div><div class="cl" style="left:298.8px;top:160.58px">        <span class="t">this</span>.<span class="f">draw</span><span class="b2">(</span><span class="b2">)</span>;</div><div class="ln" style="left:246.0px;top:176.46px;width:40px">41</div><div class="cl" style="left:298.8px;top:176.46px">    <span class="b1">}</span></div><div class="ln" style="left:246.0px;top:192.34px;width:40px">42</div><div class="ln" style="left:246.0px;top:208.22px;width:40px">43</div><div class="cl" style="left:298.8px;top:208.22px">    <span class="f">draw</span><span class="b1">(</span><span class="b1">)</span> <span class="b1">{</span></div><div class="ln act" style="left:246.0px;top:224.10px;width:40px">44</div><div class="mk" style="left:286.5px;top:224.10px">&#8212;</div><div class="cl" style="left:298.8px;top:224.10px">        <i>// <span class="cj" style="width:68.70px">绘制当前方块</span></i></div><div class="ln" style="left:246.0px;top:541.70px;width:40px">45</div><div class="cl" style="left:298.8px;top:541.70px">    <span class="b1">}</span></div><div class="ln" style="left:246.0px;top:557.58px;width:40px">46</div><div class="ln" style="left:246.0px;top:573.46px;width:40px">47</div><div class="cl" style="left:298.8px;top:573.46px">    <span class="f">moveDown</span><span class="b1">(</span><span class="b1">)</span> <span class="b1">{</span></div><div class="ln" style="left:246.0px;top:589.34px;width:40px">48</div><div class="mk" style="left:286.5px;top:589.34px">&#8212;</div><div class="cl" style="left:298.8px;top:589.34px">        <i>// <span class="cj" style="width:68.70px">向下移动方块</span></i></div><div class="ln" style="left:246.0px;top:652.86px;width:40px">49</div><div class="cl" style="left:298.8px;top:652.86px">    <span class="b1">}</span></div><div class="ln" style="left:246.0px;top:668.74px;width:40px">50</div><div class="ln" style="left:246.0px;top:684.62px;width:40px">51</div><div class="cl" style="left:298.8px;top:684.62px">    <span class="f">control</span><span class="b1">(</span>e<span class="b1">)</span> <span class="b1">{</span></div><div class="ln" style="left:246.0px;top:700.50px;width:40px">52</div><div class="mk" style="left:286.5px;top:700.50px">&#8212;</div><div class="cl" style="left:298.8px;top:700.50px">        <i>// <span class="cj" style="width:45.80px">键盘控制</span></i></div>
<div class="al" style="left:884.0px;top:224px;width:539.0px;height:318px"></div><div class="al" style="left:884.0px;top:589px;width:539.0px;height:64px"></div><div class="al" style="left:884.0px;top:700px;width:539.0px;height:48px"></div><div class="ol" style="left:884.0px;top:224px;width:51.1px;height:16px"></div><div class="ol" style="left:935.1px;top:351px;width:487.9px;height:16px"></div><div class="ol" style="left:884.0px;top:367px;width:51.1px;height:16px"></div><div class="ol" style="left:884.0px;top:589px;width:51.1px;height:16px"></div><div class="ol" style="left:884.0px;top:700px;width:51.1px;height:16px"></div><div class="ig" style="left:884.5px;top:65px;width:1.0px;height:683px"></div><div class="ig" style="left:909.8px;top:65px;width:1.0px;height:32px"></div><div class="ig" style="left:909.8px;top:145px;width:1.0px;height:31px"></div><div class="ig" style="left:909.8px;top:224px;width:1.0px;height:318px"></div><div class="ig" style="left:909.8px;top:589px;width:1.0px;height:64px"></div><div class="ig" style="left:909.8px;top:700px;width:1.0px;height:48px"></div><div class="ig" style="left:935.1px;top:256px;width:1.0px;height:63px"></div><div class="ig" style="left:935.1px;top:383px;width:1.0px;height:143px"></div><div class="ig" style="left:935.1px;top:716px;width:1.0px;height:16px"></div><div class="ig" style="left:960.5px;top:399px;width:1.0px;height:111px"></div><div class="ig" style="left:985.8px;top:478px;width:1.0px;height:16px"></div><div class="ln" style="left:831.8px;top:65.30px;width:40px">34</div><div class="cl" style="left:884.5px;top:65.30px">        <span class="t">this</span>.<span class="p">startBtn</span>.<span class="f">addEventListener</span><span class="b2">(</span><span class="s">'click'</span>, <span class="b0">(</span><span class="b0">)</span> <span class="k">=&gt;</span> <span class="t">this</span>.<span class="f">startGame</span><span class="b0">(</span><span class="b0">)</span><span class="b2">)</span>;</div><div class="ln" style="left:831.8px;top:81.18px;width:40px">35</div><div class="cl" style="left:884.5px;top:81.18px">        document.<span class="f">addEventListener</span><span class="b2">(</span><span class="s">'keydown'</span>, <span class="b0">(</span>e<span class="b0">)</span> <span class="k">=&gt;</span> <span class="t">this</span>.<span class="f">control</span><span class="b0">(</span>e<span class="b0">)</span><span class="b2">)</span>;</div><div class="ln" style="left:831.8px;top:97.06px;width:40px">36</div><div class="cl" style="left:884.5px;top:97.06px">    <span class="b1">}</span></div><div class="ln" style="left:831.8px;top:112.94px;width:40px">37</div><div class="ln" style="left:831.8px;top:128.82px;width:40px">38</div><div class="cl" style="left:884.5px;top:128.82px">    <span class="f">startGame</span><span class="b1">(</span><span class="b1">)</span> <span class="b1">{</span></div><div class="ln" style="left:831.8px;top:144.70px;width:40px">39</div><div class="cl" style="left:884.5px;top:144.70px">        <span class="t">this</span>.<span class="p">timerId</span> <span class="o">=</span> <span class="f">setInterval</span><span class="b2">(</span><span class="b0">(</span><span class="b0">)</span> <span class="k">=&gt;</span> <span class="t">this</span>.<span class="f">moveDown</span><span class="b0">(</span><span class="b0">)</span>, <span class="n">1000</span><span class="b2">)</span>;</div><div class="ln" style="left:831.8px;top:160.58px;width:40px">40</div><div class="cl" style="left:884.5px;top:160.58px">        <span class="t">this</span>.<span class="f">draw</span><span class="b2">(</span><span class="b2">)</span>;</div><div class="ln" style="left:831.8px;top:176.46px;width:40px">41</div><div class="cl" style="left:884.5px;top:176.46px">    <span class="b1">}</span></div><div class="ln" style="left:831.8px;top:192.34px;width:40px">42</div><div class="ln" style="left:831.8px;top:208.22px;width:40px">43</div><div class="cl" style="left:884.5px;top:208.22px">    <span class="f">draw</span><span class="b1">(</span><span class="b1">)</span> <span class="b1">{</span></div><div class="ln" style="left:831.8px;top:224.10px;width:40px">44</div><div class="mk" style="left:872.3px;top:224.10px">+</div><div class="cl" style="left:884.5px;top:224.10px">        <i>// <span class="cj" style="width:68.70px">随机选择方块</span></i></div><div class="ln" style="left:831.8px;top:239.98px;width:40px">45</div><div class="mk" style="left:872.3px;top:239.98px">+</div><div class="cl" style="left:884.5px;top:239.98px">        <span class="k">if</span> <span class="b2">(</span><span class="o">!</span><span class="t">this</span>.<span class="p">currentTetromino</span><span class="b2">)</span> <span class="b2">{</span></div><div class="ln" style="left:831.8px;top:255.86px;width:40px">46</div><div class="mk" style="left:872.3px;top:255.86px">+</div><div class="cl" style="left:884.5px;top:255.86px">            <span class="k">const</span> <span class="y">random</span> <span class="o">=</span> Math.<span class="f">floor</span><span class="b0">(</span>Math.<span class="f">random</span><span class="b1">(</span><span class="b1">)</span> <span class="o">*</span> <span class="n">7</span><span class="b0">)</span>;</div><div class="ln" style="left:831.8px;top:271.74px;width:40px">47</div><div class="mk" style="left:872.3px;top:271.74px">+</div><div class="cl" style="left:884.5px;top:271.74px">            <span class="k">const</span> <span class="y">tetrominoNames</span> <span class="o">=</span> <span class="b0">[</span><span class="s">'I'</span>, <span class="s">'O'</span>, <span class="s">'T'</span>, <span class="s">'S'</span>, <span class="s">'Z'</span>, <span class="s">'J'</span>, <span class="s">'L'</span><span class="b0">]</span>;</div><div class="ln" style="left:831.8px;top:287.62px;width:40px">48</div><div class="mk" style="left:872.3px;top:287.62px">+</div><div class="cl" style="left:884.5px;top:287.62px">            <span class="t">this</span>.<span class="p">currentTetromino</span> <span class="o">=</span> tetrominoNames<span class="b0">[</span>random<span class="b0">]</span>;</div><div class="ln" style="left:831.8px;top:303.50px;width:40px">49</div><div class="mk" style="left:872.3px;top:303.50px">+</div><div class="cl" style="left:884.5px;top:303.50px">            <span class="t">this</span>.<span class="p">currentShape</span> <span class="o">=</span> <span class="t">this</span>.<span class="p">tetrominoes</span><span class="b0">[</span><span class="t">this</span>.<span class="p">currentTetromino</span><span class="b0">]</span>;</div><div class="ln" style="left:831.8px;top:319.38px;width:40px">50</div><div class="mk" style="left:872.3px;top:319.38px">+</div><div class="cl" style="left:884.5px;top:319.38px">        <span class="b2">}</span></div><div class="ln" style="left:831.8px;top:335.26px;width:40px">51</div><div class="mk" style="left:872.3px;top:335.26px">+</div><div class="ln" style="left:831.8px;top:351.14px;width:40px">52</div><div class="mk" style="left:872.3px;top:351.14px">+</div><div class="cl" style="left:884.5px;top:351.14px">        <i>// <span class="cj" style="width:45.80px">绘制方块</span></i></div><div class="ln" style="left:831.8px;top:367.02px;width:40px">53</div><div class="mk" style="left:872.3px;top:367.02px">+</div><div class="cl" style="left:884.5px;top:367.02px">        <span class="t">this</span>.<span class="p">currentShape</span><span class="b2">[</span><span class="t">this</span>.<span class="p">currentRotation</span><span class="b2">]</span>.<span class="f">forEach</span><span class="b2">(</span><span class="b0">(</span>index, i<span class="b0">)</span> <span class="k">=&gt;</span> <span class="b0">{</span></div><div class="ln" style="left:831.8px;top:382.90px;width:40px">54</div><div class="mk" style="left:872.3px;top:382.90px">+</div><div class="cl" style="left:884.5px;top:382.90px">            <span class="k">if</span> <span class="b1">(</span>index<span class="b1">)</span> <span class="b1">{</span></div><div class="ln" style="left:831.8px;top:398.78px;width:40px">55</div><div class="mk" style="left:872.3px;top:398.78px">+</div><div class="cl" style="left:884.5px;top:398.78px">                <span class="k">const</span> <span class="y">x</span> <span class="o">=</span> <span class="b2">(</span><span class="t">this</span>.<span class="p">currentPosition</span> <span class="o">%</span> <span class="t">this</span>.<span class="p">width</span><span class="b2">)</span> <span class="o">+</span> <span class="b2">(</span>i <span class="o">%</span> <span class="t">this</span>.</div><div class="ln" style="left:831.8px;top:414.66px;width:40px"></div><div class="mk" style="left:872.3px;top:414.66px">+</div><div class="cl" style="left:884.5px;top:414.66px">                currentShape<span class="b0">[</span><span class="n">0</span><span class="b0">]</span>.<span class="p">length</span><span class="b2">)</span>;</div><div class="ln" style="left:831.8px;top:430.54px;width:40px">56</div><div class="mk" style="left:872.3px;top:430.54px">+</div><div class="cl" style="left:884.5px;top:430.54px">                <span class="k">const</span> <span class="y">y</span> <span class="o">=</span> Math.<span class="f">floor</span><span class="b2">(</span><span class="t">this</span>.<span class="p">currentPosition</span> <span class="o">/</span> <span class="t">this</span>.<span class="p">width</span><span class="b2">)</span> <span class="o">+</span> Math.</div><div class="ln" style="left:831.8px;top:446.42px;width:40px"></div><div class="mk" style="left:872.3px;top:446.42px">+</div><div class="cl" style="left:884.5px;top:446.42px">                <span class="f">floor</span><span class="b2">(</span>i <span class="o">/</span> <span class="t">this</span>.<span class="p">currentShape</span><span class="b0">[</span><span class="n">0</span><span class="b0">]</span>.<span class="p">length</span><span class="b2">)</span>;</div><div class="ln" style="left:831.8px;top:462.30px;width:40px">57</div><div class="mk" style="left:872.3px;top:462.30px">+</div><div class="cl" style="left:884.5px;top:462.30px">                <span class="k">if</span> <span class="b2">(</span><span class="t">this</span>.<span class="p">squares</span><span class="b0">[</span>y <span class="o">*</span> <span class="t">this</span>.<span class="p">width</span> <span class="o">+</span> x<span class="b0">]</span><span class="b2">)</span> <span class="b2">{</span></div><div class="ln" style="left:831.8px;top:478.18px;width:40px">58</div><div class="mk" style="left:872.3px;top:478.18px">+</div><div class="cl" style="left:884.5px;top:478.18px">                    <span class="t">this</span>.<span class="p">squares</span><span class="b0">[</span>y <span class="o">*</span> <span class="t">this</span>.<span class="p">width</span> <span class="o">+</span> x<span class="b0">]</span>.<span class="p">classList</span>.<span class="f">add</span><span class="b0">(</span><span class="s">'tetromino'</span><span class="b0">)</span>;</div><div class="ln" style="left:831.8px;top:494.06px;width:40px">59</div><div class="mk" style="left:872.3px;top:494.06px">+</div><div class="cl" style="left:884.5px;top:494.06px">                <span class="b2">}</span></div><div class="ln" style="left:831.8px;top:509.94px;width:40px">60</div><div class="mk" style="left:872.3px;top:509.94px">+</div><div class="cl" style="left:884.5px;top:509.94px">            <span class="b1">}</span></div><div class="ln" style="left:831.8px;top:525.82px;width:40px">61</div><div class="mk" style="left:872.3px;top:525.82px">+</div><div class="cl" style="left:884.5px;top:525.82px">        <span class="b0">}</span><span class="b2">)</span>;</div><div class="ln" style="left:831.8px;top:541.70px;width:40px">62</div><div class="cl" style="left:884.5px;top:541.70px">    <span class="b1">}</span></div><div class="ln" style="left:831.8px;top:557.58px;width:40px">63</div><div class="ln" style="left:831.8px;top:573.46px;width:40px">64</div><div class="cl" style="left:884.5px;top:573.46px">    <span class="f">moveDown</span><span class="b1">(</span><span class="b1">)</span> <span class="b1">{</span></div><div class="ln" style="left:831.8px;top:589.34px;width:40px">65</div><div class="mk" style="left:872.3px;top:589.34px">+</div><div class="cl" style="left:884.5px;top:589.34px">        <span class="t">this</span>.<span class="f">undraw</span><span class="b2">(</span><span class="b2">)</span>;</div><div class="ln" style="left:831.8px;top:605.22px;width:40px">66</div><div class="mk" style="left:872.3px;top:605.22px">+</div><div class="cl" style="left:884.5px;top:605.22px">        <span class="t">this</span>.<span class="p">currentPosition</span> <span class="o">+=</span> <span class="t">this</span>.<span class="p">width</span>;</div><div class="ln" style="left:831.8px;top:621.10px;width:40px">67</div><div class="mk" style="left:872.3px;top:621.10px">+</div><div class="cl" style="left:884.5px;top:621.10px">        <span class="t">this</span>.<span class="f">draw</span><span class="b2">(</span><span class="b2">)</span>;</div><div class="ln" style="left:831.8px;top:636.98px;width:40px">68</div><div class="mk" style="left:872.3px;top:636.98px">+</div><div class="cl" style="left:884.5px;top:636.98px">        <span class="t">this</span>.<span class="f">freeze</span><span class="b2">(</span><span class="b2">)</span>;</div><div class="ln" style="left:831.8px;top:652.86px;width:40px">69</div><div class="cl" style="left:884.5px;top:652.86px">    <span class="b1">}</span></div><div class="ln" style="left:831.8px;top:668.74px;width:40px">70</div><div class="ln" style="left:831.8px;top:684.62px;width:40px">71</div><div class="cl" style="left:884.5px;top:684.62px">    <span class="f">control</span><span class="b1">(</span>e<span class="b1">)</span> <span class="b1">{</span></div><div class="ln" style="left:831.8px;top:700.50px;width:40px">72</div><div class="mk" style="left:872.3px;top:700.50px">+</div><div class="cl" style="left:884.5px;top:700.50px">        <span class="k">if</span> <span class="b2">(</span>e.<span class="p">keyCode</span> <span class="o">===</span> <span class="n">37</span><span class="b2">)</span> <span class="b2">{</span> <i>// <span class="cj" style="width:34.35px">左箭头</span></i></div><div class="ln" style="left:831.8px;top:716.38px;width:40px">73</div><div class="mk" style="left:872.3px;top:716.38px">+</div><div class="cl" style="left:884.5px;top:716.38px">            <span class="t">this</span>.<span class="f">moveLeft</span><span class="b0">(</span><span class="b0">)</span>;</div><div class="ln" style="left:831.8px;top:732.26px;width:40px">74</div><div class="mk" style="left:872.3px;top:732.26px">+</div><div class="cl" style="left:884.5px;top:732.26px">        <span class="b2">}</span> <span class="k">else</span> <span class="k">if</span> <span class="b2">(</span>e.<span class="p">keyCode</span> <span class="o">===</span> <span class="n">38</span><span class="b2">)</span> <span class="b2">{</span> <i>// <span class="cj" style="width:34.35px">上箭头</span></i></div>
<div class="sticky" style="left:252px;top:40.5px;width:549.5px;height:31.8px"></div><div class="ln" style="left:246.0px;top:40.5px;width:40px">1</div><div class="cl" style="left:298.8px;top:40.5px"><span class="k">class</span> <span class="y">Tetris</span> <span class="b0">{</span></div><div class="ln" style="left:246.0px;top:56.4px;width:40px">27</div><div class="cl" style="left:298.8px;top:56.4px">    <span class="f">init</span><span class="b1">(</span><span class="b1">)</span> <span class="b1">{</span></div><div class="shadow" style="left:252px;top:71.8px;width:549.5px"></div><div class="sticky" style="left:839px;top:40.5px;width:574.0px;height:31.8px"></div><div class="ln" style="left:831.8px;top:40.5px;width:40px">1</div><div class="cl" style="left:884.5px;top:40.5px"><span class="k">class</span> <span class="y">Tetris</span> <span class="b0">{</span></div><div class="ln" style="left:831.8px;top:56.4px;width:40px">27</div><div class="cl" style="left:884.5px;top:56.4px">    <span class="f">init</span><span class="b1">(</span><span class="b1">)</span> <span class="b1">{</span></div><div class="shadow" style="left:839px;top:71.8px;width:574.0px"></div>

<!-- middle -->
<div style="position:absolute;left:812.5px;top:40.5px;width:2px;height:700px;background:#1e2127"></div>
<div style="position:absolute;left:835.6px;top:40.5px;width:2px;height:700px;background:#1e2127"></div>
<div style="position:absolute;left:802px;top:40px;width:35px;height:2px;background:#1e2127"></div>
<div class="vl" style="left:801.5px;top:40.5px;height:700px"></div>
<div class="vl" style="left:1413px;top:40.5px;height:700px"></div>



<div style="position:absolute;left:348.6px;top:225px;width:1px;height:14.5px;background:#c0392b"></div>
<div style="position:absolute;left:437.7px;top:225px;width:6.2px;height:14.5px;background:rgba(255,255,255,0.07)"></div>
<div style="position:absolute;left:977.3px;top:352px;width:1px;height:14px;background:#6f8aa8"></div>
<!-- overview rulers -->
<div style="position:absolute;left:1423.2px;top:165.2px;width:16.8px;height:178.3px;background:#3e434d"></div>
<div style="position:absolute;left:1434px;top:210px;width:6px;height:79.5px;background:#3a5968"></div>
<div style="position:absolute;left:1434px;top:301px;width:6px;height:17.6px;background:#3a5968"></div>
<div style="position:absolute;left:1434px;top:329.4px;width:6px;height:14.1px;background:#3a5968"></div>
<div style="position:absolute;left:1434px;top:343.5px;width:6px;height:168px;background:#1b4959"></div>
<div style="position:absolute;left:1423.2px;top:210px;width:10.8px;height:4.7px;background:#6a3b46"></div>
<div style="position:absolute;left:1423.2px;top:301px;width:10.8px;height:4.7px;background:#6a3b46"></div>
<div style="position:absolute;left:1423.2px;top:329.4px;width:10.8px;height:4.5px;background:#6a3b46"></div>
<div style="position:absolute;left:1413.5px;top:40px;width:9.5px;height:1.5px;background:#3e5a94"></div>
<div style="position:absolute;left:802.5px;top:210px;width:9.5px;height:1.3px;background:#4a6fb5"></div>
<div class="redbox" style="left:298.3px;top:215px;width:1133.7px;height:462.2px"></div>
<div class="circ" style="left:308px;top:225.3px">2</div>
</body></html>
